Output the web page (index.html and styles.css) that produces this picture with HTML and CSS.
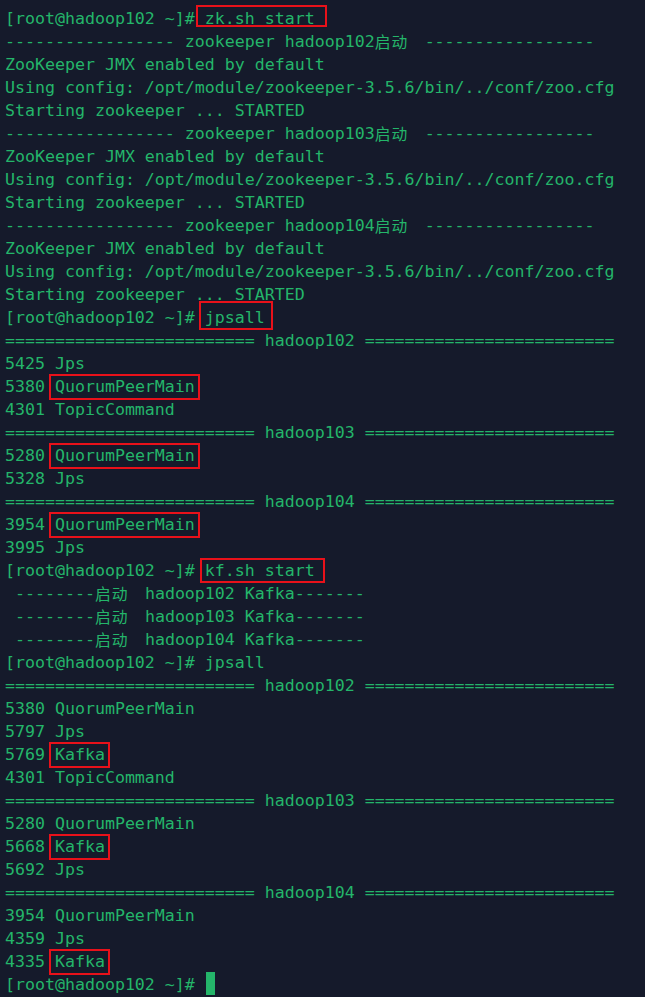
FILE: index.html
```html
<!DOCTYPE html>
<html lang="zh">
<head>
<meta charset="utf-8">
<title>terminal</title>
<link rel="stylesheet" href="styles.css">
</head>
<body>
<div class="term">
<div class="ln">[root@hadoop102 ~]# <span class="hl hl-zk">zk.sh start </span></div>
<div class="ln">----------------- zookeeper hadoop102<span class="cjk">启动</span> -----------------</div>
<div class="ln">ZooKeeper JMX enabled by default</div>
<div class="ln">Using config: /opt/module/zookeeper-3.5.6/bin/../conf/zoo.cfg</div>
<div class="ln">Starting zookeeper ... STARTED</div>
<div class="ln">----------------- zookeeper hadoop103<span class="cjk">启动</span> -----------------</div>
<div class="ln">ZooKeeper JMX enabled by default</div>
<div class="ln">Using config: /opt/module/zookeeper-3.5.6/bin/../conf/zoo.cfg</div>
<div class="ln">Starting zookeeper ... STARTED</div>
<div class="ln">----------------- zookeeper hadoop104<span class="cjk">启动</span> -----------------</div>
<div class="ln">ZooKeeper JMX enabled by default</div>
<div class="ln">Using config: /opt/module/zookeeper-3.5.6/bin/../conf/zoo.cfg</div>
<div class="ln">Starting zookeeper ... STARTED</div>
<div class="ln">[root@hadoop102 ~]# <span class="hl hl-jps">jpsall</span></div>
<div class="ln">========================= hadoop102 =========================</div>
<div class="ln">5425 Jps</div>
<div class="ln">5380 <span class="hl">QuorumPeerMain</span></div>
<div class="ln">4301 TopicCommand</div>
<div class="ln">========================= hadoop103 =========================</div>
<div class="ln">5280 <span class="hl">QuorumPeerMain</span></div>
<div class="ln">5328 Jps</div>
<div class="ln">========================= hadoop104 =========================</div>
<div class="ln">3954 <span class="hl">QuorumPeerMain</span></div>
<div class="ln">3995 Jps</div>
<div class="ln">[root@hadoop102 ~]# <span class="hl hl-kf">kf.sh start </span></div>
<div class="ln"> --------<span class="cjk">启动</span> hadoop102 Kafka-------</div>
<div class="ln"> --------<span class="cjk">启动</span> hadoop103 Kafka-------</div>
<div class="ln"> --------<span class="cjk">启动</span> hadoop104 Kafka-------</div>
<div class="ln">[root@hadoop102 ~]# jpsall</div>
<div class="ln">========================= hadoop102 =========================</div>
<div class="ln">5380 QuorumPeerMain</div>
<div class="ln">5797 Jps</div>
<div class="ln">5769 <span class="hl">Kafka</span></div>
<div class="ln">4301 TopicCommand</div>
<div class="ln">========================= hadoop103 =========================</div>
<div class="ln">5280 QuorumPeerMain</div>
<div class="ln">5668 <span class="hl">Kafka</span></div>
<div class="ln">5692 Jps</div>
<div class="ln">========================= hadoop104 =========================</div>
<div class="ln">3954 QuorumPeerMain</div>
<div class="ln">4359 Jps</div>
<div class="ln">4335 <span class="hl">Kafka</span></div>
<div class="ln">[root@hadoop102 ~]# <span class="cursor"></span></div>
</div>
</body>
</html>
```
FILE: styles.css
```css
html, body {
  margin: 0;
  padding: 0;
  background: #151a2b;
}
body {
  width: 645px;
  height: 997px;
  overflow: hidden;
}
.term {
  padding: 7px 0 0 5px;
  font-family: "DejaVu Sans Mono", "Liberation Mono", "Noto Sans CJK SC", monospace;
  font-size: 16.6px;
  line-height: 23px;
  color: #24b56a;
}
.ln {
  white-space: pre;
  height: 23px;
}
.cjk {
  display: inline-block;
  width: 40px;
  height: 23px;
  line-height: 23px;
  font-family: "Noto Sans CJK SC", sans-serif;
  font-size: 15.8px;
  letter-spacing: 1px;
  vertical-align: top;
}
.hl {
  position: relative;
  display: inline-block;
  vertical-align: top;
  height: 23px;
}
.hl::after {
  content: "";
  position: absolute;
  left: -6px;
  right: -5px;
  top: -1px;
  bottom: -2px;
  border: 2px solid #e8111a;
}
.hl-zk::after {
  left: -9px;
  right: -2px;
  top: -2px;
  bottom: 3px;
}
.hl-jps::after {
  left: -6px;
  right: -8px;
  top: -5px;
  bottom: -1px;
}
.hl-kf::after {
  left: -5px;
  right: 0;
  top: -1px;
  bottom: -1px;
}
.cursor {
  display: inline-block;
  width: 9px;
  height: 23px;
  background: #24b56a;
  vertical-align: top;
  margin-top: -1px;
  margin-left: 1px;
}
```
